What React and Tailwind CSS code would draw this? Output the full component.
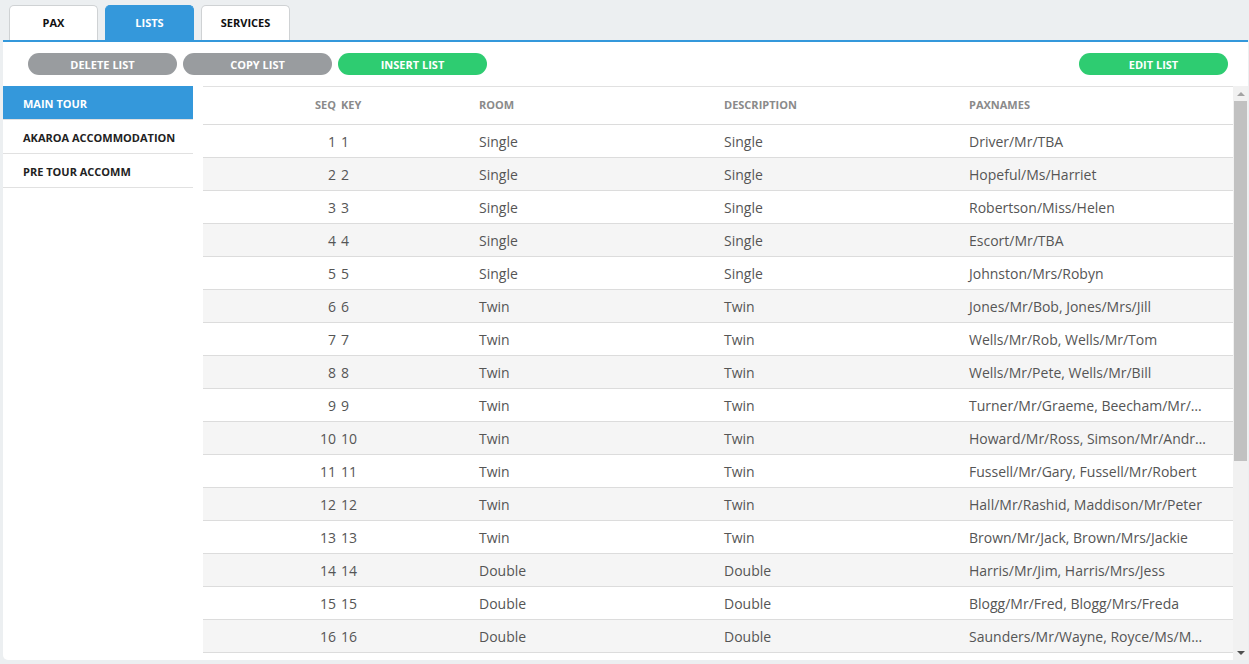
import React from "react";

const rows = [
  ["1", "1", "Single", "Single", "Driver/Mr/TBA"],
  ["2", "2", "Single", "Single", "Hopeful/Ms/Harriet"],
  ["3", "3", "Single", "Single", "Robertson/Miss/Helen"],
  ["4", "4", "Single", "Single", "Escort/Mr/TBA"],
  ["5", "5", "Single", "Single", "Johnston/Mrs/Robyn"],
  ["6", "6", "Twin", "Twin", "Jones/Mr/Bob, Jones/Mrs/Jill"],
  ["7", "7", "Twin", "Twin", "Wells/Mr/Rob, Wells/Mr/Tom"],
  ["8", "8", "Twin", "Twin", "Wells/Mr/Pete, Wells/Mr/Bill"],
  ["9", "9", "Twin", "Twin", "Turner/Mr/Graeme, Beecham/Mr/Steve"],
  ["10", "10", "Twin", "Twin", "Howard/Mr/Ross, Simson/Mr/Andrew"],
  ["11", "11", "Twin", "Twin", "Fussell/Mr/Gary, Fussell/Mr/Robert"],
  ["12", "12", "Twin", "Twin", "Hall/Mr/Rashid, Maddison/Mr/Peter"],
  ["13", "13", "Twin", "Twin", "Brown/Mr/Jack, Brown/Mrs/Jackie"],
  ["14", "14", "Double", "Double", "Harris/Mr/Jim, Harris/Mrs/Jess"],
  ["15", "15", "Double", "Double", "Blogg/Mr/Fred, Blogg/Mrs/Freda"],
  ["16", "16", "Double", "Double", "Saunders/Mr/Wayne, Royce/Ms/Mary"],
];

const lists = ["MAIN TOUR", "AKAROA ACCOMMODATION", "PRE TOUR ACCOMM"];

function Tab({ label, active }) {
  return (
    <div
      className={`w-[89px] h-[35px] flex items-center justify-center rounded-t-[5px] border border-b-0 text-[11px] font-bold ${
        active ? "bg-[#3498db] border-[#3498db] text-white" : "bg-white border-[#cfd2d4] text-[#111]"
      }`}
    >
      {label}
    </div>
  );
}

function Btn({ label, green }) {
  return (
    <button
      className={`block w-[149px] h-[22px] pt-[2px] rounded-full text-[11px] font-bold text-white ${
        green ? "bg-[#2ecc71]" : "bg-[#999c9f]"
      }`}
    >
      {label}
    </button>
  );
}

export default function App() {
  return (
    <div
      className="w-[1249px] h-[664px] bg-[#eceff1] overflow-hidden"
      style={{ fontFamily: "'Open Sans', sans-serif" }}
    >
      {/* Tabs */}
      <div className="flex gap-[7px] pl-[9px] pt-[5px]">
        <Tab label="PAX" />
        <Tab label="LISTS" active />
        <Tab label="SERVICES" />
      </div>

      <div className="ml-[3px] mr-[1px] h-[620px] bg-white border-t-2 border-[#3498db] rounded-b-[5px] flex flex-col">
        {/* Toolbar */}
        <div className="flex items-start pl-[25px] pr-[20px] pt-[11px] pb-[11px]">
          <div className="flex gap-[6px]">
            <Btn label="DELETE LIST" />
            <Btn label="COPY LIST" />
            <Btn label="INSERT LIST" green />
          </div>
          <div className="ml-auto flex">
            <Btn label="EDIT LIST" green />
          </div>
        </div>

        <div className="flex flex-1 min-h-0">
          {/* Lists sidebar */}
          <div className="w-[190px]">
            {lists.map((l, i) => (
              <div
                key={l}
                className={`h-[34px] flex items-center pl-[20px] pt-[3px] text-[11px] font-bold border-b border-[#e1e1e1] ${
                  i === 0 ? "bg-[#3498db] text-white" : "text-[#222]"
                }`}
              >
                {l}
              </div>
            ))}
          </div>

          {/* Table */}
          <div className="flex-1 ml-[10px] min-h-0 overflow-hidden border-t border-[#e1e1e1]">
            <div className="grid grid-cols-[133px_5px_133px_245px_245px_263px] h-[38px] items-center border-b border-[#dcdcdc] text-[11px] font-bold text-[#8a8a8a]">
              <div className="text-right">SEQ</div>
              <div />
              <div>KEY</div>
              <div className="pl-[5px]">ROOM</div>
              <div className="pl-[5px]">DESCRIPTION</div>
              <div className="pl-[5px]">PAXNAMES</div>
            </div>
            {rows.map((r, i) => (
              <div
                key={r[0]}
                className={`grid grid-cols-[133px_5px_133px_245px_245px_263px] h-[33px] items-center border-b border-[#dcdcdc] text-[14px] text-[#555] ${
                  i % 2 === 1 ? "bg-[#f5f5f5]" : "bg-white"
                }`}
              >
                <div className="text-right">{r[0]}</div>
                <div />
                <div>{r[1]}</div>
                <div className="pl-[5px]">{r[2]}</div>
                <div className="pl-[5px]">{r[3]}</div>
                <div className="pl-[5px] pr-[20px] truncate">{r[4]}</div>
              </div>
            ))}
          </div>

          {/* Scrollbar */}
          <div className="w-[15px] bg-[#f1f1f1] flex flex-col items-center">
            <div className="h-[15px] flex items-center justify-center">
              <div className="w-0 h-0 border-l-[4px] border-r-[4px] border-b-[4px] border-l-transparent border-r-transparent border-b-[#a3a3a3]" />
            </div>
            <div className="w-[13px] h-[360px] bg-[#c1c1c1]" />
            <div className="flex-1" />
            <div className="h-[14px] flex items-center justify-center">
              <div className="w-0 h-0 border-l-[4px] border-r-[4px] border-t-[4px] border-l-transparent border-r-transparent border-t-[#505050]" />
            </div>
          </div>
        </div>
      </div>
    </div>
  );
}
